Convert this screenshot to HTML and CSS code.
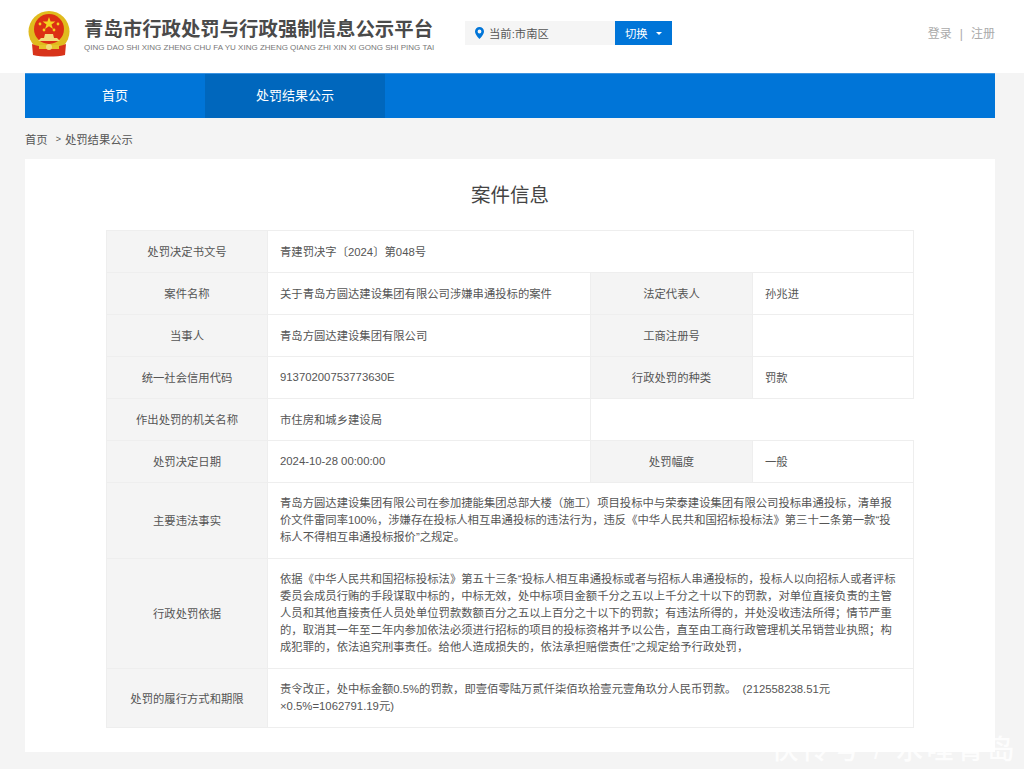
FILE: index.html
```html
<!DOCTYPE html>
<html lang="zh-CN">
<head>
<meta charset="utf-8">
<title>案件信息</title>
<link rel="stylesheet" href="styles.css">
</head>
<body>
<header class="top">
  <div class="brand">
    <svg class="emblem" width="44" height="46" viewBox="0 0 44 46">
      <circle cx="22" cy="20.5" r="20.5" fill="#e0bb1e"/>
      <circle cx="22" cy="18" r="15" fill="#dc2f14"/>
      <polygon points="22,6 23.6,10.6 28.4,10.6 24.5,13.4 26,18 22,15.2 18,18 19.5,13.4 15.6,10.6 20.4,10.6" fill="#f4d21f"/>
      <circle cx="13" cy="13" r="1.4" fill="#f4d21f"/>
      <circle cx="31" cy="13" r="1.4" fill="#f4d21f"/>
      <circle cx="17" cy="19" r="1.4" fill="#f4d21f"/>
      <circle cx="27" cy="19" r="1.4" fill="#f4d21f"/>
      <path d="M11 30 L14 27 H17 L18 23 H26 L27 27 H30 L33 30 Z" fill="#f3dc7a"/>
      <path d="M5 33 C13 37 31 37 39 33 L38 44 C30 46 14 46 6 44 Z" fill="#d8331a"/>
      <path d="M12 34 H32 V38 H12 Z" fill="#e6c42a"/>
      <circle cx="22" cy="36" r="3" fill="#f3dc7a"/>
    </svg>
    <div class="brand-text">
      <div class="brand-title">青岛市行政处罚与行政强制信息公示平台</div>
      <div class="brand-sub">QING DAO SHI XING ZHENG CHU FA YU XING ZHENG QIANG ZHI XIN XI GONG SHI PING TAI</div>
    </div>
  </div>
  <div class="loc">
    <div class="loc-current">
      <svg width="9" height="12" viewBox="0 0 9 12"><path fill-rule="evenodd" d="M4.5 0A4.5 4.5 0 0 0 0 4.5C0 7.5 4.5 12 4.5 12S9 7.5 9 4.5A4.5 4.5 0 0 0 4.5 0ZM4.5 2.6a1.9 1.9 0 1 1 0 3.8a1.9 1.9 0 0 1 0-3.8Z" fill="#0075d8"/></svg>
      <span>当前:市南区</span>
    </div>
    <div class="loc-btn">切换<i class="caret"></i></div>
  </div>
  <div class="auth"><span>登录</span><span class="sep">|</span><span>注册</span></div>
</header>

<nav class="nav">
  <a class="nav-item">首页</a>
  <a class="nav-item active">处罚结果公示</a>
</nav>

<div class="crumb"><span>首页</span><span class="gt">&gt;</span><span>处罚结果公示</span></div>

<main class="card">
  <h1 class="title">案件信息</h1>
  <div class="info">
    <div class="lab h42">处罚决定书文号</div>
    <div class="val span3">青建罚决字〔2024〕第048号</div>

    <div class="lab h42">案件名称</div>
    <div class="val">关于青岛方圆达建设集团有限公司涉嫌串通投标的案件</div>
    <div class="lab">法定代表人</div>
    <div class="val">孙兆进</div>

    <div class="lab h42">当事人</div>
    <div class="val">青岛方圆达建设集团有限公司</div>
    <div class="lab">工商注册号</div>
    <div class="val"></div>

    <div class="lab h42">统一社会信用代码</div>
    <div class="val">91370200753773630E</div>
    <div class="lab">行政处罚的种类</div>
    <div class="val">罚款</div>

    <div class="lab h42">作出处罚的机关名称</div>
    <div class="val">市住房和城乡建设局</div>
    <div class="blank"></div>

    <div class="lab h42">处罚决定日期</div>
    <div class="val">2024-10-28 00:00:00</div>
    <div class="lab">处罚幅度</div>
    <div class="val">一般</div>

    <div class="lab h76">主要违法事实</div>
    <div class="val span3 para"><p class="para-text">青岛方圆达建设集团有限公司在参加捷能集团总部大楼（施工）项目投标中与荣泰建设集团有限公司投标串通投标，清单报价文件雷同率100%，涉嫌存在投标人相互串通投标的违法行为，违反《中华人民共和国招标投标法》第三十二条第一款“投标人不得相互串通投标报价”之规定。</p></div>

    <div class="lab h110">行政处罚依据</div>
    <div class="val span3 para"><p class="para-text">依据《中华人民共和国招标投标法》第五十三条“投标人相互串通投标或者与招标人串通投标的，投标人以向招标人或者评标委员会成员行贿的手段谋取中标的，中标无效，处中标项目金额千分之五以上千分之十以下的罚款，对单位直接负责的主管人员和其他直接责任人员处单位罚款数额百分之五以上百分之十以下的罚款；有违法所得的，并处没收违法所得；情节严重的，取消其一年至二年内参加依法必须进行招标的项目的投标资格并予以公告，直至由工商行政管理机关吊销营业执照；构成犯罪的，依法追究刑事责任。给他人造成损失的，依法承担赔偿责任”之规定给予行政处罚，</p></div>

    <div class="lab h59">处罚的履行方式和期限</div>
    <div class="val span3 para"><p class="para-text">责令改正，处中标金额0.5%的罚款，即壹佰零陆万贰仟柒佰玖拾壹元壹角玖分人民币罚款。&nbsp;&nbsp;(212558238.51元×0.5%=1062791.19元)</p></div>
  </div>
</main>
<div class="watermark">快传号 / 水哩青岛</div>
</body>
</html>
```
FILE: styles.css
```css
* { box-sizing: border-box; }
html, body { margin: 0; height: 769px; overflow: hidden; }
body {
  position: relative;
  background: #f4f4f4;
  font-family: "Liberation Sans", "Noto Sans CJK SC", sans-serif;
  color: #555;
  font-size: 11.33px;
}
.top {
  height: 73px;
  background: #fff;
  display: flex;
  align-items: flex-start;
  padding: 0 29px 0 27px;
}
.brand { display: flex; width: 438px; padding-top: 11px; }
.emblem { flex: none; filter: blur(0.4px); }
.brand-text { margin-left: 13px; padding-top: 6px; }
.brand-title { font-size: 19.4px; line-height: 24px; font-weight: 700; color: #4a4a4a; white-space: nowrap; }
.brand-sub { font-size: 8px; line-height: 10px; margin-top: 2px; color: #777; white-space: nowrap; }
.loc { display: flex; margin-top: 21px; height: 24px; }
.loc-current {
  width: 150px; background: #f5f5f5; display: flex; align-items: center; gap: 5px; padding: 0 0 1px 10px; color: #555;
}
.loc-btn {
  width: 57px; background: #0075d8; color: #fff; display: flex; align-items: center; padding: 0 0 1px 10px;
}
.caret {
  margin-left: 8px; margin-top: 2px; width: 0; height: 0;
  border-left: 3px solid transparent; border-right: 3px solid transparent; border-top: 3px solid #fff;
}
.auth { margin-left: auto; margin-top: 25px; line-height: 18px; font-size: 12px; color: #aaa; display: flex; gap: 8px; }
.nav { margin: 0 29px 0 25px; height: 45px; background: #0075d8; display: flex; border-top: 1px solid #3c93e0; }
.nav-item { width: 180px; font-size: 13px; line-height: 43px; color: #fff; text-align: center; }
.active { background: #0067bd; }
.crumb { margin-left: 25px; height: 41px; display: flex; align-items: center; color: #555; }
.gt { margin: 0 4px 0 8px; font-size: 9px; }
.card { margin: 0 29px 0 25px; height: 593px; background: #fff; padding: 0 81px; }
.title { margin: 0; height: 71px; font-size: 19.5px; font-weight: 400; line-height: 73px; text-align: center; color: #444; }
.info {
  display: grid;
  grid-template-columns: 161px 323px 162px 161px;
  border-top: 1px solid #eee;
  border-left: 1px solid #eee;
}
.lab, .val, .blank { border-right: 1px solid #eee; border-bottom: 1px solid #eee; }
.lab { background: #f4f4f4; display: flex; align-items: center; justify-content: center; padding-bottom: 1px; }
.val { display: flex; align-items: center; padding: 0 12px 1px; color: #555; }
.span3 { grid-column: span 3; }
.blank { grid-column: span 2; border-right: 0; border-bottom: 1px solid #eee; }
.para { padding: 0 16px 0 12px; }
.para-text { margin: 0; line-height: 17px; }
.h42 { height: 42px; }
.h76 { height: 76px; }
.h110 { height: 110px; }
.h59 { height: 59px; }
.watermark {
  position: absolute; right: 6px; bottom: 0;
  font-size: 27px; line-height: 38px; color: rgba(255,255,255,.85); font-weight: 500; letter-spacing: 3.5px; white-space: pre;
}
```
